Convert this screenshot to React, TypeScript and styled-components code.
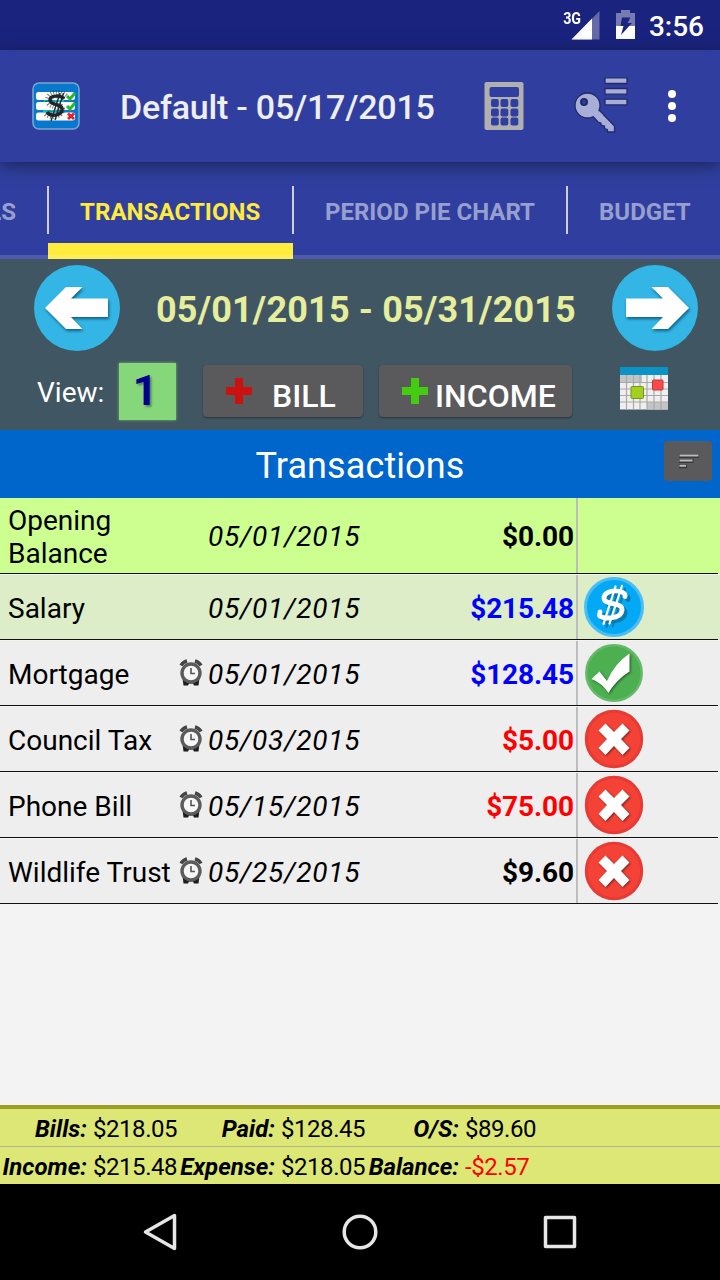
import React from "react";
import styled, { createGlobalStyle } from "styled-components";

const GlobalStyle = createGlobalStyle`
  * { box-sizing: border-box; }
  body { margin: 0; font-family: Roboto, sans-serif; background: #f3f3f3; }
  svg { display: block; flex: none; }
  button { border: 0; font-family: inherit; cursor: pointer; }
`;

const Screen = styled.div`
  width: 720px;
  height: 1280px;
  display: flex;
  flex-direction: column;
  overflow: hidden;
  background: #f3f3f3;
`;

const StatusBar = styled.header`
  height: 50px;
  flex: none;
  background: #1a237e;
  display: flex;
  align-items: center;
  justify-content: flex-end;
  padding-right: 16px;
`;

const Network = styled.span`
  font-size: 17px;
  line-height: 18px;
  font-weight: 700;
  letter-spacing: -0.4px;
  color: #fff;
  align-self: flex-start;
  margin: 9px -10px 0 0;
  transform: scaleX(0.84);
  transform-origin: right;
`;

const Clock = styled.time`
  color: #fff;
  font-size: 28px;
  line-height: 34px;
  font-weight: 500;
  margin: 3px 0 0 14px;
`;

const AppBar = styled.div`
  height: 112px;
  flex: none;
  background: #303f9f;
  display: flex;
  align-items: center;
  padding: 0 16px 0 32px;
  position: relative;
  z-index: 1;
  box-shadow: 0 3px 16px rgba(20, 25, 60, 0.75);
`;

const Title = styled.h1`
  margin: 2px 0 0 40px;
  width: 364px;
  font-size: 34px;
  line-height: 42px;
  font-weight: 500;
  letter-spacing: -0.23px;
  color: #eeeeee;
  white-space: nowrap;
`;

const Tabs = styled.nav`
  height: 97px;
  flex: none;
  background: #303f9f;
  box-shadow: inset 0 -4px #505bad;
  display: flex;
`;

const Tab = styled.div<{ $w: number; $active?: boolean; $end?: boolean }>`
  width: ${(p) => p.$w}px;
  flex: none;
  display: flex;
  align-items: center;
  justify-content: ${(p) => (p.$end ? "flex-end" : "flex-start")};
  padding: ${(p) => (p.$end ? "2px 32px 0 0" : "2px 0 0 32px")};
  font-size: 24px;
  font-weight: 700;
  letter-spacing: ${(p) => (p.$active ? "0.08px" : "0")};
  white-space: nowrap;
  color: ${(p) => (p.$active ? "#ffeb3b" : "#979fcf")};
  background: ${(p) => (p.$active ? "linear-gradient(#ffeb3b 75%, #ffed58 75%) bottom / 100% 16px no-repeat" : "none")};
`;

const TabDivider = styled.i`
  width: 2px;
  height: 48px;
  flex: none;
  margin: 24px -1px 0;
  background: #cfcfcf;
`;

const Period = styled.section`
  height: 171px;
  flex: none;
  background: #405663;
`;

const PeriodRow = styled.div`
  height: 98px;
  display: flex;
  align-items: center;
  justify-content: space-between;
  padding: 0 22px 0 34px;
`;

const PeriodText = styled.div`
  font-size: 36px;
  line-height: 42px;
  font-weight: 700;
  letter-spacing: 0.17px;
  color: #e6ee9c;
  margin-top: 4px;
  white-space: nowrap;
`;

const Actions = styled.div`
  height: 73px;
  display: flex;
  align-items: flex-start;
  padding: 5px 0 0 37px;
`;

const ViewLabel = styled.span`
  width: 81px;
  font-size: 28px;
  line-height: 34px;
  color: #fff;
  margin-top: 14px;
`;

const DayButton = styled.button`
  width: 57px;
  height: 57px;
  flex: none;
  margin: 0.5px 0.5px 0;
  padding: 0 4px 3px 0;
  background: #86d77a;
  box-shadow: 0 0 3px #79b96f;
  color: #00008f;
  font: 700 43px/54px Roboto, sans-serif;
  text-shadow: 2px 2px 2px #5c8b63;
`;

const AddButton = styled.button<{ $w: number; $gap: number; $margin: number }>`
  width: ${(p) => p.$w}px;
  height: 52px;
  flex: none;
  margin: 3px 0 0 ${(p) => p.$margin}px;
  padding: 0 0 0 22px;
  display: flex;
  align-items: center;
  gap: ${(p) => p.$gap}px;
  border-radius: 4px;
  background: #5a595b;
  box-shadow: 0 1px 2px rgba(0, 0, 0, 0.4);
  color: #fff;
  font-size: 32px;
  line-height: 38px;
  font-weight: 500;
  span { margin-top: 9px; }
`;

const CalendarButton = styled.button`
  padding: 0;
  background: none;
  margin: 5px 0 0 48px;
`;

const ListHeader = styled.div`
  height: 68px;
  flex: none;
  background: #0066cc;
  display: grid;
  grid-template-columns: 56px 1fr 56px;
`;

const ListTitle = styled.h2`
  margin: 15px 0 0;
  text-align: center;
  font-size: 36px;
  line-height: 42px;
  font-weight: 400;
  letter-spacing: 0.1px;
  color: #fff;
`;

const SortButton = styled.button`
  width: 48px;
  height: 40px;
  margin-top: 11px;
  padding: 0 0 0 15px;
  border-radius: 4px;
  background: #5a595b;
`;

const List = styled.main`
  flex: 1;
`;

const Name = styled.div<{ $wrap?: boolean }>`
  padding: 3px 0 0 8px;
  width: ${(p) => (p.$wrap ? "140px" : "auto")};
  white-space: ${(p) => (p.$wrap ? "normal" : "nowrap")};
`;

const DateCell = styled.div`
  font-style: italic;
  letter-spacing: 0.78px;
  padding-top: 3px;
`;

const Amount = styled.div<{ $color: string }>`
  font-weight: 700;
  letter-spacing: -0.1px;
  text-align: right;
  color: ${(p) => p.$color};
  padding: 3px 2px 0 0;
`;

const Row = styled.div<{ $bg: string; $h: number }>`
  height: ${(p) => p.$h}px;
  display: grid;
  grid-template-columns: 179px 29px 188px 180px 2px 1fr;
  align-items: center;
  background: linear-gradient(#111, #111) left bottom / 718px 1px no-repeat, ${(p) => p.$bg};
  padding-bottom: 1px;
  & + & { border-top: 1px solid #f4f4f2; }
  &:first-child ${DateCell}, &:first-child ${Amount} { padding-top: 1px; }
  font-size: 28px;
  line-height: 33px;
  color: #000;
`;

const Rule = styled.i`
  align-self: stretch;
  background: #bdbdbd;
`;

const StatusCell = styled.div`
  padding-left: 6px;
  height: 60px;
`;

const Totals = styled.footer`
  height: 79px;
  flex: none;
  border-top: 4px solid #9e9d24;
  background: #dce775;
`;

const TotalsRow = styled.div`
  height: 38px;
  display: grid;
  grid-template-columns: 81px 94px 94px 92px 92px 1fr;
  align-items: center;
  font-size: 24px;
  line-height: 28px;
  color: #000;
  white-space: nowrap;
  &:first-child { border-bottom: 1px solid #b1b18a; }
`;

const TotalLabel = styled.b`
  font-style: italic;
  display: flex;
  justify-content: flex-end;
  padding-top: 2px;
  margin-right: -6px;
`;

const TotalValue = styled.span<{ $neg?: boolean }>`
  padding: 2px 0 0 12px;
  letter-spacing: -0.45px;
  color: ${(p) => (p.$neg ? "#ff0000" : "#000")};
`;

const NavBar = styled.div`
  height: 96px;
  flex: none;
  background: #000;
  display: flex;
  align-items: center;
  justify-content: center;
  gap: 160px;
`;

const SignalIcon = () => (
  <svg width="29" height="30" viewBox="0 0 29 30">
    <path d="M28.5 1V29.5H.5z" fill="#666ba8" />
    <path d="M21 8.500V29.500H.5z" fill="#fff" />
  </svg>
);

const BatterySvg = styled.svg`
  margin-left: 16px;
`;

const BatteryIcon = () => (
  <BatterySvg width="19" height="30" viewBox="0 0 19 30">
    <path d="M5 0h9v3h5v13H0V3h5z" fill="#767bb1" />
    <path d="M0 16h19v13H0z" fill="#fff" />
    <path d="M6 7.500h8.500L11.500 13h4.500L5 25l2.500-9H4.500z" fill="#1a237e" />
  </BatterySvg>
);

const AppIcon = () => (
  <svg width="48" height="48" viewBox="0 0 48 48">
    <defs>
      <filter id="soft">
        <feGaussianBlur stdDeviation=".5" />
      </filter>
    </defs>
    <rect x="1" y="1" width="46" height="46" rx="6" fill="#0878ce" stroke="#79a9cb" strokeWidth="1.500" />
    <g filter="url(#soft)">
      {[10, 20, 30.5].map((y) => (
        <rect key={y} x="4" y={y} width="39" height="8" rx="2.500" fill="#fff" />
      ))}
      <path d="M12 19h20M11 29h20" stroke="#0bbcc4" strokeWidth="2" />
      <g fill="none" stroke="#20292c">
        <path d="M32 17c-3-4-14-4-14 1 0 6 13 3 12 10-1 6-12 7-15 2" strokeWidth="3.500" />
        <path d="M28 11L19 39M31.500 11L23 38" strokeWidth="1.300" />
        <path d="M33 15c-4-4-16-4-16 3 0 7 13 4 12 10-1 6-11 7-15 2" strokeWidth="8" strokeDasharray=".8 1.400" opacity=".6" />
      </g>
      <path d="M35 14l3 3 5-6M35 24l3 3 5-6" fill="none" stroke="#27b825" strokeWidth="3" />
      <path d="M36 31.500l6 5.500M42 31.500l-6 5.500" stroke="#ec1c28" strokeWidth="2.800" />
    </g>
  </svg>
);

const CalculatorIcon = () => (
  <svg width="40" height="48" viewBox="0 0 40 48">
    <rect x=".5" y="0" width="39" height="48" rx="2" fill="#b0b0b0" />
    <rect x="5.500" y="5" width="29.500" height="10" rx="2" fill="#303f9f" />
    {[17, 26.5, 35.5].map((y) =>
      [7, 16.5, 26.5].map((x) => <rect key={`${x}-${y}`} x={x} y={y} width="7.800" height="8" rx="2" fill="#303f9f" />)
    )}
  </svg>
);

const KeySvg = styled.svg`
  margin: -2px 0 0 49px;
`;

const KeyIcon = () => (
  <KeySvg width="56" height="58" viewBox="0 0 56 58">
    <g fill="#a9aed9" stroke="#202a68" strokeWidth="1.300" strokeLinejoin="round">
      <path d="M25 33L41.500 50V56H34.500V53.500L31.500 52.500V50L28 49V47L25 46L18 38z" />
      <circle cx="14.500" cy="29.500" r="12.500" />
      <path d="M18 38L24 33.500L30 39L25 44z" stroke="none" />
      <circle cx="11" cy="26" r="3" fill="#303f9f" strokeWidth="2" />
      <path d="M32 1.800h22v5.700H32zM32 12.500h22v5.700H32zM32 23.200h22v5.700H32z" />
    </g>
  </KeySvg>
);

const MoreSvg = styled.svg`
  margin-left: 39px;
`;

const MoreIcon = () => (
  <MoreSvg width="8" height="32" viewBox="0 0 8 32">
    {[4, 16, 28].map((y) => (
      <circle key={y} cx="4" cy={y} r="4" fill="#fff" />
    ))}
  </MoreSvg>
);

const ArrowShape = styled.path`
  filter: drop-shadow(1px 2px 1.5px rgba(0, 60, 90, 0.7));
`;

const ARROWS = {
  left: "M11 43L32 22H48.500L37 33.500H74V52H37L48.500 64H32z",
  right: "M77 43L56 22H39.500L51 33.500H14V52H51L39.500 64H56z",
};

const ArrowIcon = ({ dir }: { dir: "left" | "right" }) => (
  <svg width="86" height="86" viewBox="0 0 86 86" overflow="visible">
    <circle cx="43" cy="43" r="43" fill="#33b5e5" />
    <ArrowShape d={ARROWS[dir]} fill="#fff" />
  </svg>
);

const PlusIcon = ({ color }: { color: string }) => (
  <svg width="28" height="28" viewBox="0 0 28 28">
    <path d="M10 1h8v9h9v8h-9v9h-8v-9H1v-8h9z" fill={color} />
  </svg>
);

const CalendarIcon = () => (
  <svg width="48" height="43" viewBox="0 0 48 43">
    <path d="M0 0h48v42.500H0z" fill="#efefef" />
    <path d="M0 8h22v7H0zM27 35h21v7.500H27z" fill="#c4c4c4" />
    <path d="M0 15.500h48M0 22h48M0 28.500h48M0 35h48M6.500 8v35M13.500 8v35M20 8v35M27 8v35M34 8v35M41 8v35" stroke="#a9a9a9" strokeWidth="1.200" />
    <path d="M0 0h48v8H0z" fill="#0a93c6" />
    <rect x="11" y="19.500" width="12.500" height="12" rx="1" fill="#a3d01c" stroke="#789324" />
    <rect x="32.500" y="13" width="10.500" height="10" rx="1" fill="#ff4949" stroke="#b53d3d" />
  </svg>
);

const SortIcon = () => (
  <svg width="21" height="16" viewBox="0 0 21 16">
    <path d="M0 1h20v4H0zM0 6h14.500v4H0zM0 11.200h8v4H0z" fill="#373737" />
    <path d="M.5 2.500h19M.5 7.500h13M.5 12.700h6.500" stroke="#bcbcbc" strokeWidth="2" />
  </svg>
);

const AlarmIcon = () => (
  <svg width="24" height="28" viewBox="0 0 24 28">
    <g filter="url(#soft)">
      <path d="M2 6.500Q4 3 8 2M22 6.500Q20 3 16 2" fill="none" stroke="#444" strokeWidth="3.500" />
      <path d="M3.500 19l1 7.500h4.500l1-2h4l1 2h4.500l1-7.500z" fill="#1c1c1c" />
      <circle cx="12" cy="14" r="9" fill="#f6f6f6" stroke="#5c5c5c" strokeWidth="3.400" />
      <path d="M12 9v5.500h4" fill="none" stroke="#555" strokeWidth="1.600" />
    </g>
  </svg>
);

type Status = "income" | "paid" | "due";

const Mark = styled.path`
  fill: #fff;
  filter: drop-shadow(1.5px 1.5px 1px rgba(0, 0, 0, 0.5));
`;

const StatusIcon = ({ status }: { status: Status }) => (
  <svg width="60" height="60" viewBox="0 0 60 60">
    {status === "income" && (
      <>
        <circle cx="30" cy="30" r="28.500" fill="#03a9f4" stroke="#4abdf5" strokeWidth="3" />
        <g fill="none" strokeLinecap="round" strokeLinejoin="round">
          {[
            ["#087cb2", "translate(3 3)"],
            ["#fff", ""],
          ].map(([c, t]) => (
            <g key={c} stroke={c} transform={t}>
              <path d="M41 19.500C43 12.500 20 11 20 21C20 29 39 24 38 33.500C37 43 17 42 15.500 38.500L16 35" strokeWidth="4.800" />
              <path d="M31.500 9.500L19.500 47M38 9L25.500 46.500" strokeWidth="2.200" />
            </g>
          ))}
        </g>
      </>
    )}
    {status === "paid" && (
      <>
        <circle cx="30" cy="30" r="27.700" fill="#4caf50" stroke="#66b96a" strokeWidth="2.500" />
        <Mark d="M7.500 36L15.500 28.500L23 38Q31 20 45.500 10.500V28.500Q32 37 24.500 50Q18 40 7.500 36z" />
      </>
    )}
    {status === "due" && (
      <>
        <circle cx="30" cy="30" r="27.700" fill="#f44336" stroke="#e63a35" strokeWidth="3" />
        <Mark d="M14.500 21.500L21.500 14.500L30 23L38.500 14.500L45.500 21.500L37 30L45.500 39L38.500 46L30 37L21.500 46L14.500 39L23 30z" />
      </>
    )}
  </svg>
);

const ROWS: { name: string; date: string; amount: string; color: string; bg: string; alarm?: boolean; status?: Status }[] = [
  { name: "Opening Balance", date: "05/01/2015", amount: "$0.00", color: "#000", bg: "#ccff90" },
  { name: "Salary", date: "05/01/2015", amount: "$215.48", color: "#0000ff", bg: "#dcedc8", status: "income" },
  { name: "Mortgage", date: "05/01/2015", amount: "$128.45", color: "#0000ff", bg: "#eeeeee", alarm: true, status: "paid" },
  { name: "Council Tax", date: "05/03/2015", amount: "$5.00", color: "#ff0000", bg: "#eeeeee", alarm: true, status: "due" },
  { name: "Phone Bill", date: "05/15/2015", amount: "$75.00", color: "#ff0000", bg: "#eeeeee", alarm: true, status: "due" },
  { name: "Wildlife Trust", date: "05/25/2015", amount: "$9.60", color: "#000", bg: "#eeeeee", alarm: true, status: "due" },
];

const TOTALS = [
  [["Bills:", "$218.05"], ["Paid:", "$128.45"], ["O/S:", "$89.60"]],
  [["Income:", "$215.48"], ["Expense:", "$218.05"], ["Balance:", "-$2.57"]],
];

export default function App() {
  return (
    <>
      <GlobalStyle />
      <Screen>
        <StatusBar>
          <Network>3G</Network>
          <SignalIcon />
          <BatteryIcon />
          <Clock>3:56</Clock>
        </StatusBar>
        <AppBar>
          <AppIcon />
          <Title>Default - 05/17/2015</Title>
          <CalculatorIcon />
          <KeyIcon />
          <MoreIcon />
        </AppBar>
        <Tabs>
          <Tab $w={48} $end>BILLS</Tab>
          <TabDivider />
          <Tab $w={245} $active>TRANSACTIONS</Tab>
          <TabDivider />
          <Tab $w={274}>PERIOD PIE CHART</Tab>
          <TabDivider />
          <Tab $w={153}>BUDGET</Tab>
        </Tabs>
        <Period>
          <PeriodRow>
            <ArrowIcon dir="left" />
            <PeriodText>05/01/2015 - 05/31/2015</PeriodText>
            <ArrowIcon dir="right" />
          </PeriodRow>
          <Actions>
            <ViewLabel>View:</ViewLabel>
            <DayButton>1</DayButton>
            <AddButton $w={160} $gap={19} $margin={27}>
              <PlusIcon color="#cc1111" />
              <span>BILL</span>
            </AddButton>
            <AddButton $w={193} $gap={6} $margin={16}>
              <PlusIcon color="#44cc11" />
              <span>INCOME</span>
            </AddButton>
            <CalendarButton aria-label="Calendar">
              <CalendarIcon />
            </CalendarButton>
          </Actions>
        </Period>
        <ListHeader>
          <span />
          <ListTitle>Transactions</ListTitle>
          <SortButton aria-label="Sort">
            <SortIcon />
          </SortButton>
        </ListHeader>
        <List>
          {ROWS.map((r, i) => (
            <Row key={r.name} $bg={r.bg} $h={i === 0 ? 76 : 66}>
              <Name $wrap={i === 0}>{r.name}</Name>
              <div>{r.alarm && <AlarmIcon />}</div>
              <DateCell>{r.date}</DateCell>
              <Amount $color={r.color}>{r.amount}</Amount>
              <Rule />
              <StatusCell>{r.status && <StatusIcon status={r.status} />}</StatusCell>
            </Row>
          ))}
        </List>
        <Totals>
          {TOTALS.map((row) => (
            <TotalsRow key={row[0][0]}>
              {row.map(([label, value]) => (
                <React.Fragment key={label}>
                  <TotalLabel>{label}</TotalLabel>
                  <TotalValue $neg={value.startsWith("-")}>{value}</TotalValue>
                </React.Fragment>
              ))}
            </TotalsRow>
          ))}
        </Totals>
        <NavBar>
          <svg width="40" height="40" viewBox="0 0 40 40" fill="none" stroke="#e6e6e6" strokeWidth="3.500" strokeLinejoin="round">
            <path d="M34.500 3.500V36.500L5.500 20z" />
          </svg>
          <svg width="40" height="40" viewBox="0 0 40 40" fill="none" stroke="#e6e6e6" strokeWidth="3.500">
            <circle cx="20" cy="20" r="15.800" />
          </svg>
          <svg width="40" height="40" viewBox="0 0 40 40" fill="none" stroke="#e6e6e6" strokeWidth="3.500" strokeLinejoin="round">
            <path d="M5.500 5.500h29v29h-29z" />
          </svg>
        </NavBar>
      </Screen>
    </>
  );
}
